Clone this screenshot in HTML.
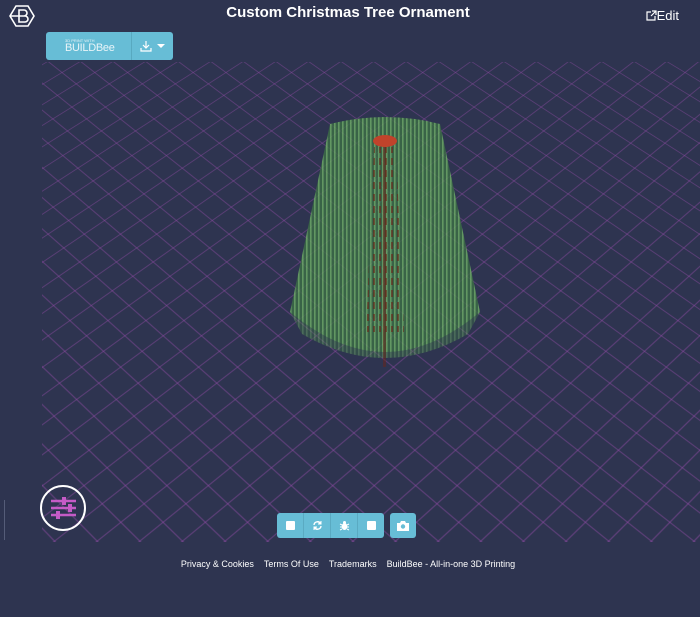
<!DOCTYPE html>
<html><head><style>
html,body{margin:0;padding:0;overflow:hidden}
body{width:700px;height:617px;background:#2e3450;font-family:"Liberation Sans",sans-serif;position:relative;overflow:hidden;color:#fff}
.title{position:absolute;top:4px;left:0;width:696px;text-align:center;font-weight:bold;font-size:15px}
.edit{position:absolute;top:8px;right:21px;font-size:13px}
.canvas{position:absolute;left:42px;top:62px;width:658px;height:480px;overflow:hidden;background:#2e3450;perspective:1400px}
.plane{position:absolute;left:-900px;top:-1000px;width:2400px;height:2400px;transform:rotateX(38deg) rotateZ(45deg);transform-origin:50% 50%;
background-image:repeating-linear-gradient(0deg,rgba(150,75,170,.5) 0 1px,transparent 1px 26px),repeating-linear-gradient(90deg,rgba(150,75,170,.5) 0 1px,transparent 1px 26px)}
.btnbar{position:absolute;left:46px;top:32px;width:127px;height:28px;background:#67bdd6;border-radius:3px}
.tools{position:absolute;left:277px;top:513px;height:25px;display:flex}
.tb{width:26px;height:25px;background:#67bdd6;border-right:1px solid #5aaac2;display:flex;align-items:center;justify-content:center}
.sq{width:9px;height:9px;background:#fff;border-radius:1px}
.footer{position:absolute;top:559px;left:-2px;width:700px;text-align:center;font-size:9px}
.footer span{margin:0 5px}
</style></head><body>
<svg style="position:absolute;left:9px;top:4px" width="26" height="24" viewBox="0 0 26 24"><path d="M7 2H19L25 12L19 22H7L1 12Z" fill="none" stroke="#fff" stroke-width="1.6"/><path d="M10 6h5a3 3 0 0 1 0 6h-5zM10 12h6a3 3 0 0 1 0 6h-6z M10 6v12 M1 12h9" fill="none" stroke="#fff" stroke-width="1.6"/></svg>
<div class="title">Custom Christmas Tree Ornament</div>
<div class="edit"><svg width="11" height="11" viewBox="0 0 11 11" style="vertical-align:-1px"><path d="M5 2H1V10H9V6M6 1h4v4M10 1L5 6" fill="none" stroke="#fff" stroke-width="1.2"/></svg>Edit</div>
<div class="canvas"><div class="plane"></div>
<svg style="position:absolute;left:0;top:0" width="658" height="480">
<defs><pattern id="st" width="4" height="10" patternUnits="userSpaceOnUse"><rect width="4" height="10" fill="#3c6f45"/><rect width="1.6" height="10" fill="#6fb066"/></pattern>
<pattern id="dash" width="6" height="12" patternUnits="userSpaceOnUse"><rect x="1" width="2" height="7" fill="#6a2418"/></pattern></defs>
<path d="M248 250 Q343 330 438 250 L426 272 Q343 320 260 272 Z" fill="url(#st)" opacity=".45"/>
<path d="M288 62 Q343 48 398 62 L438 250 Q343 330 248 250 Z" fill="url(#st)" opacity=".8"/>
<path d="M332 85 L354 85 L362 270 L324 270Z" fill="url(#dash)" opacity=".6"/>
<rect x="341" y="80" width="3" height="225" fill="#6a2418" opacity=".5"/>
<ellipse cx="343" cy="79" rx="12" ry="6" fill="#c0432b"/>
</svg></div>
<div class="btnbar">
<div style="position:absolute;left:19px;top:6px;font-size:4px;color:#e8f4f8">3D PRINT WITH</div>
<div style="position:absolute;left:19px;top:10px;font-size:11px;color:#e8f4f8;letter-spacing:-.3px">BUILDBee</div>
<div style="position:absolute;left:85px;top:0;width:1px;height:28px;background:#58a9c0"></div>
<svg style="position:absolute;left:94px;top:8px" width="12" height="12" viewBox="0 0 12 12"><path d="M6 1v7M3 5l3 3 3-3M1 8v3h10V8" fill="none" stroke="#fff" stroke-width="1.2"/></svg>
<div style="position:absolute;left:111px;top:12px;border:4px solid transparent;border-top:4px solid #fff;border-bottom:0"></div>
</div>
<div style="position:absolute;left:4px;top:500px;width:1px;height:40px;background:#555c78"></div>
<div style="position:absolute;left:40px;top:485px;width:42px;height:42px;border:2px solid #fff;border-radius:50%">
<svg width="42" height="42" viewBox="0 0 42 42"><g stroke="#c55bc6" stroke-width="2.5"><path d="M9 14h25M9 21h25M9 28h25"/></g><g fill="#c55bc6"><rect x="20" y="10" width="4" height="8"/><rect x="26" y="17" width="4" height="8"/><rect x="14" y="24" width="4" height="8"/></g></svg></div>
<div class="tools">
<div class="tb" style="border-radius:3px 0 0 3px"><div class="sq"></div></div>
<div class="tb"><svg width="11" height="11" viewBox="0 0 11 11"><path d="M2 5a3.5 3.5 0 0 1 6.5-1.5M9 6a3.5 3.5 0 0 1-6.5 1.5" fill="none" stroke="#fff" stroke-width="1.4"/><path d="M9 1v3H6M2 10V7h3" fill="#fff" stroke="#fff"/></svg></div>
<div class="tb"><svg width="11" height="11" viewBox="0 0 11 11"><ellipse cx="5.5" cy="6.5" rx="2.8" ry="3.5" fill="#fff"/><circle cx="5.5" cy="2.5" r="1.5" fill="#fff"/><path d="M1 4l2 1M10 4l-2 1M1 7h2M10 7H8M1 10l2-1M10 10l-2-1" stroke="#fff"/></svg></div>
<div class="tb" style="border-radius:0 3px 3px 0;border:0"><div class="sq"></div></div>
<div class="tb" style="margin-left:6px;border-radius:3px;border:0"><svg width="12" height="10" viewBox="0 0 12 10"><path d="M0 2h3l1-2h4l1 2h3v8H0z" fill="#fff"/><circle cx="6" cy="5.5" r="2.2" fill="#67bdd6"/></svg></div>
</div>
<div class="footer"><span>Privacy &amp; Cookies</span><span>Terms Of Use</span><span>Trademarks</span><span>BuildBee - All-in-one 3D Printing</span></div>
</body></html>
